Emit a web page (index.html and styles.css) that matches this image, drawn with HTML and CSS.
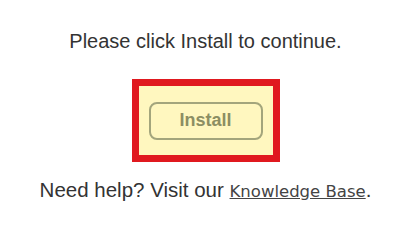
FILE: index.html
```html
<!DOCTYPE html>
<html>
	<head>
		<meta charset="UTF-8">
		<title>Install</title>
		<link rel="stylesheet" href="styles.css">
	</head>
	<body>
		<div class="prompt">
			<p class="intro">Please click Install to continue.</p>
			<div class="frame">
				<button class="install">Install</button>
			</div>
			<p class="help">Need help? Visit our <a href="#">Knowledge Base</a>.</p>
		</div>
	</body>
</html>
```
FILE: styles.css
```css
* {margin: 0;padding: 0;}
body {background: #fff;font-family: "Liberation Sans", Arial, sans-serif;color: #333;}
.prompt {width: 411px;display: flex;flex-direction: column;align-items: center;}
.intro {font-size: 20px;line-height: 23px;margin-top: 30px;}
.frame {margin-top: 26px;width: 134px;height: 69px;border: 7px solid #e0191f;background: #fff7bf;display: flex;align-items: center;justify-content: center;}
.install {width: 114px;height: 38px;border: 2px solid #a3a57c;border-radius: 8px;background: #fff7bf;color: #8c8e63;font: bold 18px "Liberation Sans", Arial, sans-serif;}
.help {font-size: 20.5px;line-height: 23px;margin-top: 16px;}
.help a {color: #444;font-family: "DejaVu Sans", Verdana, sans-serif;font-size: 16.5px;}
```
